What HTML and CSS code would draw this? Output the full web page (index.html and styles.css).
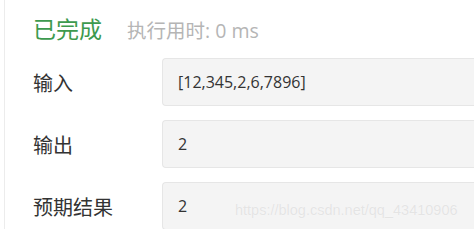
FILE: index.html
```html
<!DOCTYPE html>
<html lang="zh-CN">

<head>
    <meta charset="UTF-8">
    <title>执行结果</title>
    <link rel="stylesheet" href="styles.css">
</head>

<body>
    <div class="result">
        <p class="head">
            <span class="status">已完成</span>
            <span class="time">执行用时: 0 ms</span>
        </p>
        <div class="row">
            <span class="label">输入</span>
            <div class="box">[12,345,2,6,7896]</div>
        </div>
        <div class="row">
            <span class="label">输出</span>
            <div class="box">2</div>
        </div>
        <div class="row">
            <span class="label">预期结果</span>
            <div class="box">2</div>
        </div>
        <span class="mark">https://blog.csdn.net/qq_43410906</span>
    </div>
</body>

</html>
```

FILE: styles.css
```css
* {
    margin: 0;
    padding: 0;
}

body {
    background: #fff;
    overflow: hidden;
    font-family: "Open Sans", "Noto Sans CJK SC", sans-serif;
    color: #333;
}

.result {
    position: relative;
    margin-left: 4px;
    height: 229px;
    padding-left: 28px;
    border-left: 1px solid #ececec;
}

.head {
    height: 58px;
    padding-top: 11px;
    box-sizing: border-box;
    display: flex;
    align-items: baseline;
}

.status {
    font-size: 23px;
    color: #3d9a4e;
    font-family: "Noto Sans CJK SC", sans-serif;
}

.time {
    margin-left: 25px;
    font-size: 19.5px;
    color: #b5b5b5;
}

.row {
    display: flex;
    align-items: center;
    margin-bottom: 14px;
}

.label {
    flex: none;
    width: 129px;
    font-size: 20px;
    font-family: "Noto Sans CJK SC", sans-serif;
}

.box {
    flex: 1;
    height: 48px;
    line-height: 46px;
    box-sizing: border-box;
    padding-left: 15px;
    background: #f4f4f4;
    border: 1px solid #e6e6e6;
    border-right: none;
    border-radius: 4px 0 0 4px;
    font-size: 16px;
}

.mark {
    position: absolute;
    left: 230px;
    top: 202px;
    font-family: "Liberation Sans", sans-serif;
    font-size: 14.5px;
    color: #e4e4e4;
    text-shadow: 0 0 1px #fff;
}
```
